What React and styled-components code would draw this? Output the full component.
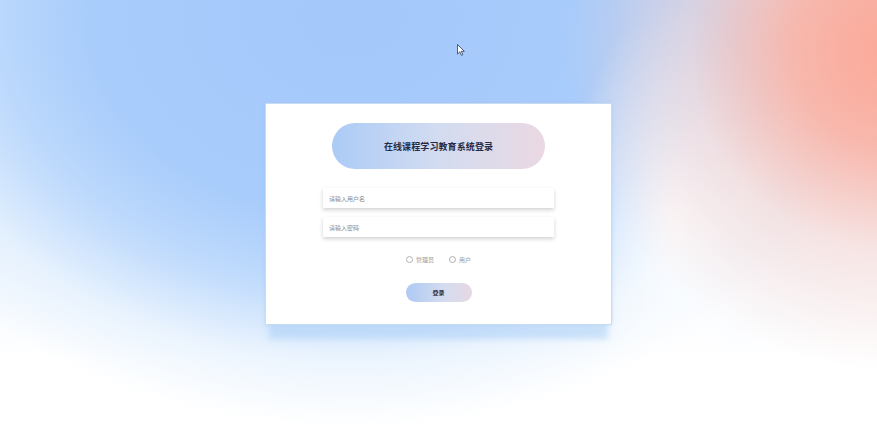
import styled, { createGlobalStyle } from 'styled-components';

const GlobalStyle = createGlobalStyle`
    html, body {
        margin: 0;
        padding: 0;
        height: 100%;
    }
    body {
        font-family: "Noto Sans CJK SC", "Noto Sans", sans-serif;
    }
    #root {
        height: 100%;
    }
`;

const Page = styled.div`
    position: relative;
    height: 100vh;
    display: flex;
    align-items: center;
    justify-content: center;
    overflow: hidden;
    background:
        radial-gradient(ellipse 330px 320px at 102% 12%, rgba(252, 168, 150, 1) 0%, rgba(252, 174, 158, 0.85) 30%, rgba(253, 205, 195, 0.45) 62%, rgba(255, 235, 230, 0) 100%),
        radial-gradient(ellipse 110px 220px at 77% 52%, rgba(255, 255, 255, 0.85) 0%, rgba(255, 255, 255, 0) 100%),
        radial-gradient(ellipse 540px 410px at 40% 4%, #a5c8fb 0%, #a8ccfb 48%, rgba(182, 213, 252, 0.85) 66%, rgba(218, 235, 253, 0.5) 84%, rgba(255, 255, 255, 0) 100%),
        linear-gradient(180deg, #d4e7fd 0%, #ffffff 85%);
`;

const Cursor = styled.svg`
    position: absolute;
    left: 457px;
    top: 44px;
    width: 8px;
    height: 12px;
    filter: blur(0.3px);
`;

const Card = styled.div`
    width: 347px;
    box-sizing: border-box;
    margin-top: 2px;
    padding: 19px 0 22px;
    background: #ffffff;
    border: 1px solid #c6dcf3;
    box-shadow: 0 18px 6px -4px rgba(170, 206, 245, 0.55), 0 0 4px rgba(160, 195, 235, 0.4);
    display: flex;
    flex-direction: column;
    align-items: center;
`;

const TitlePill = styled.div`
    width: 213px;
    height: 46px;
    border-radius: 23px;
    background: linear-gradient(90deg, #abcbf6 0%, #d3dcf1 50%, #ead8e2 100%);
    display: flex;
    align-items: center;
    justify-content: center;
    font-size: 9px;
    font-weight: 700;
    color: #252c48;
    letter-spacing: 0.1px;
`;

const Form = styled.div`
    margin-top: 19px;
    display: flex;
    flex-direction: column;
    gap: 9px;
`;

const Input = styled.input`
    width: 231px;
    height: 20px;
    box-sizing: border-box;
    border: none;
    outline: none;
    padding: 0 6px;
    background: #ffffff;
    box-shadow: 0 2px 4px rgba(0, 0, 0, 0.18);
    font-family: inherit;
    font-size: 6px;
    color: #555;

    &::placeholder {
        color: #8a8a8a;
    }
`;

const RoleRow = styled.div`
    margin-top: 17px;
    display: flex;
    align-items: center;
    gap: 15px;
    height: 10px;
`;

const RoleOption = styled.label`
    display: flex;
    align-items: center;
    gap: 3px;
    font-size: 6px;
    color: #9a9a9a;
`;

const RadioCircle = styled.span`
    width: 5px;
    height: 5px;
    border-radius: 50%;
    border: 1px solid #b0b0b0;
    background: #fff;
`;

const LoginButton = styled.button`
    margin-top: 19px;
    width: 66px;
    height: 19px;
    border: none;
    border-radius: 10px;
    background: linear-gradient(90deg, #aecaf4 0%, #d5dcf0 60%, #e6d8e2 100%);
    font-family: inherit;
    font-size: 6px;
    font-weight: 700;
    color: #2a2f45;
    padding: 0;
    cursor: pointer;
`;

const App = () => {
    return (
        <>
            <GlobalStyle />
            <Page>
                <Cursor viewBox="0 0 8 12">
                    <path d="M0.5 0.5 L0.5 10 L2.8 7.8 L4.4 11.3 L5.8 10.7 L4.3 7.3 L7.3 7.3 Z" fill="#ffffff" stroke="#2b3a55" strokeWidth="0.8" strokeLinejoin="round" />
                </Cursor>
                <Card>
                    <TitlePill>在线课程学习教育系统登录</TitlePill>
                    <Form>
                        <Input type="text" placeholder="请输入用户名" />
                        <Input type="password" placeholder="请输入密码" />
                    </Form>
                    <RoleRow>
                        <RoleOption>
                            <RadioCircle />
                            管理员
                        </RoleOption>
                        <RoleOption>
                            <RadioCircle />
                            用户
                        </RoleOption>
                    </RoleRow>
                    <LoginButton>登录</LoginButton>
                </Card>
            </Page>
        </>
    );
};

export default App;
